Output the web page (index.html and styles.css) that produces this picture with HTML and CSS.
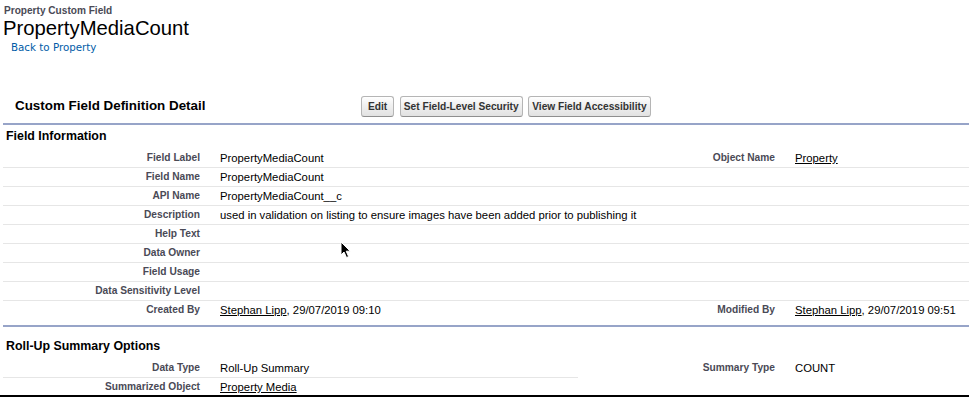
FILE: index.html
```html
<!DOCTYPE html>
<html lang="en">
<head>
<meta charset="utf-8">
<title>PropertyMediaCount</title>
<link rel="stylesheet" href="styles.css">
</head>
<body>
<div class="page">
  <div class="page-title-block">
    <h1 class="page-type">Property Custom Field</h1>
    <h2 class="page-desc">PropertyMediaCount</h2>
    <div class="breadcrumb"><a href="#" class="crumb-link">Back to Property</a></div>
  </div>

  <div class="pb-header">
    <div class="pb-title">Custom Field Definition Detail</div>
    <div class="pb-buttons">
      <button class="btn btn-wide" type="button">Edit</button>
      <button class="btn" type="button">Set Field-Level Security</button>
      <button class="btn" type="button">View Field Accessibility</button>
    </div>
  </div>

  <div class="subheader subheader-first">Field Information</div>
  <div class="detail-grid">
    <div class="lbl">Field Label</div>
    <div class="val">PropertyMediaCount</div>
    <div class="lbl">Object Name</div>
    <div class="val"><a href="#" class="rec-link">Property</a></div>

    <div class="lbl">Field Name</div>
    <div class="val">PropertyMediaCount</div>
    <div class="lbl"></div>
    <div class="val"></div>

    <div class="lbl">API Name</div>
    <div class="val">PropertyMediaCount__c</div>
    <div class="lbl"></div>
    <div class="val"></div>

    <div class="lbl">Description</div>
    <div class="val span3">used in validation on listing to ensure images have been added prior to publishing it</div>

    <div class="lbl">Help Text</div>
    <div class="val span3"></div>

    <div class="lbl">Data Owner</div>
    <div class="val span3"></div>

    <div class="lbl">Field Usage</div>
    <div class="val span3"></div>

    <div class="lbl">Data Sensitivity Level</div>
    <div class="val span3"></div>

    <div class="lbl last">Created By</div>
    <div class="val last"><a href="#" class="rec-link">Stephan Lipp</a>, 29/07/2019 09:10</div>
    <div class="lbl last">Modified By</div>
    <div class="val last"><a href="#" class="rec-link">Stephan Lipp</a>, 29/07/2019 09:51</div>
  </div>

  <div class="subheader subheader-next">Roll-Up Summary Options</div>
  <div class="detail-grid">
    <div class="lbl">Data Type</div>
    <div class="val">Roll-Up Summary</div>
    <div class="lbl last">Summary Type</div>
    <div class="val last">COUNT</div>

    <div class="lbl last">Summarized Object</div>
    <div class="val last"><a href="#" class="rec-link">Property Media</a></div>
    <div class="lbl last"></div>
    <div class="val last"></div>
  </div>
</div>

<svg class="cursor" width="12" height="18" viewBox="0 0 12 18" aria-hidden="true">
  <path d="M1 1 L1 14 L4 11 L6.5 16.5 L8.6 15.6 L6.2 10.2 L10.2 10.2 Z" fill="#000" stroke="#fff" stroke-width="1" stroke-linejoin="round"/>
</svg>
<div class="frame-bottom"></div>
</body>
</html>
```

FILE: styles.css
```css
html, body {
  margin: 0;
  padding: 0;
  background: #ffffff;
}

body {
  font-family: "Liberation Sans", Arial, sans-serif;
  font-size: 11.3px;
  color: #000000;
  overflow: hidden;
}

.page {
  padding-left: 3px;
}

.page-title-block {
  padding-top: 5px;
}

.page-type {
  margin: 0;
  font-size: 10.1px;
  line-height: 12px;
  font-weight: bold;
  color: #4a4a56;
  padding-left: 1px;
}

.page-desc {
  margin: 0;
  font-size: 20.3px;
  line-height: 22px;
  font-weight: normal;
  color: #000000;
}

.breadcrumb {
  margin-top: 2px;
  padding-left: 8px;
  font-family: "DejaVu Sans", Verdana, sans-serif;
  font-size: 10.3px;
  line-height: 13px;
}

.crumb-link {
  color: #015ba7;
  text-decoration: none;
}

.pb-header {
  display: flex;
  align-items: center;
  margin-top: 42px;
  height: 21px;
}

.pb-title {
  width: 346px;
  padding-left: 12px;
  font-size: 13.4px;
  font-weight: bold;
  color: #000000;
  line-height: 18px;
  margin-top: -2px;
}

.pb-buttons {
  display: flex;
  gap: 5.5px;
}

.btn {
  font-family: "Liberation Sans", Arial, sans-serif;
  font-size: 10.2px;
  font-weight: bold;
  color: #333333;
  line-height: 13px;
  height: 21px;
  padding: 3px 3px;
  border: 1px solid #b5b5b5;
  border-bottom-color: #8f8f8f;
  border-radius: 3px;
  background: linear-gradient(#ffffff, #f1f1f1 40%, #e2e2e2);
  box-sizing: border-box;
  cursor: pointer;
}

.btn-wide {
  padding: 3px 6px;
}

.subheader {
  border-top: 2px solid #97a4c8;
  padding-left: 3px;
  font-size: 12.4px;
  font-weight: bold;
  line-height: 18px;
  color: #000000;
}

.subheader-first {
  margin-top: 6px;
  padding-top: 2px;
  padding-bottom: 4px;
}

.subheader-next {
  margin-top: 5px;
  padding-top: 10px;
  padding-bottom: 4px;
}

.detail-grid {
  display: grid;
  grid-template-columns: 207px 368px 207px 1fr;
}

.lbl,
.val {
  height: 18px;
  border-bottom: 1px solid #e6e6e6;
  white-space: nowrap;
  overflow: visible;
}

.lbl {
  line-height: 18px;
  text-align: right;
  padding-right: 10px;
  font-size: 10.2px;
  font-weight: bold;
  color: #4a4a56;
}

.val {
  line-height: 19px;
  padding-left: 10px;
  font-size: 11.3px;
  color: #000000;
}

.span3 {
  grid-column: span 3;
}

.last {
  border-bottom-color: transparent;
}

.rec-link {
  color: #000000;
  text-decoration: underline;
}

.cursor {
  position: absolute;
  left: 340px;
  top: 241px;
}

.frame-bottom {
  position: fixed;
  left: 0;
  right: 0;
  bottom: 0;
  height: 2px;
  background: #000000;
}
```
